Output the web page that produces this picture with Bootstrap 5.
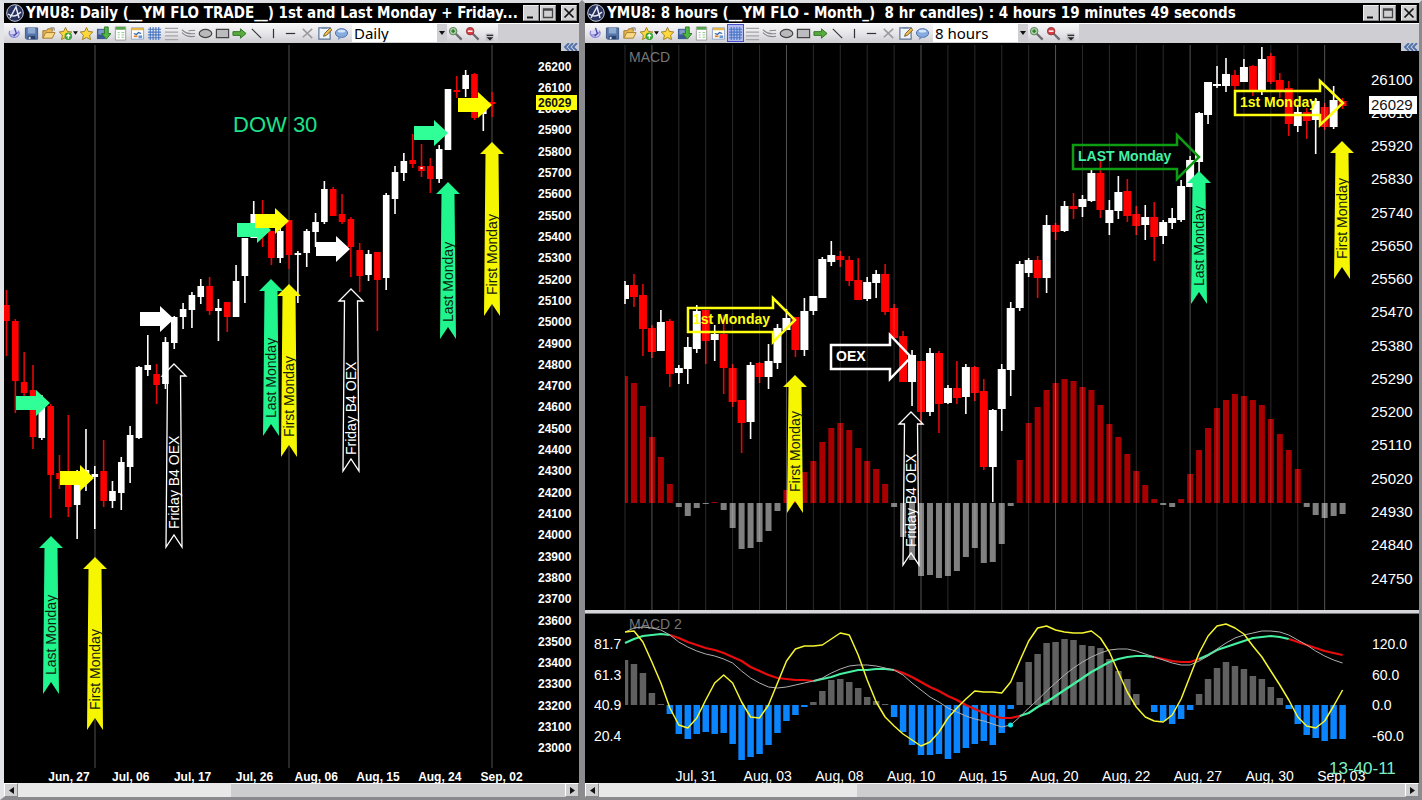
<!DOCTYPE html>
<html lang="en">
<head>
<meta charset="utf-8">
<meta name="viewport" content="width=device-width, initial-scale=1">
<title>YMU8 charts</title>
<link href="https://cdn.jsdelivr.net/npm/bootstrap@5.3.0/dist/css/bootstrap.min.css" rel="stylesheet">
<style>
body{background:#d2d2d6;font-family:"Liberation Sans",Arial,sans-serif;line-height:1}
.desk{height:100vh;min-width:900px}
.pane{min-width:0;background:#d0d0d4;border-top:3px solid #dcdee2;border-bottom:3px solid #8a8a8e;border-right:3px solid #8b8b90}
.pane-daily{flex:575 1 0;border-left:4px solid #e2e4e8}
.pane-hours{flex:834 1 0;border-left:3px solid #8b8b90}
.titlebar{height:20px;background:#000;color:#fff;padding:0 2px}
.titlebar h1{font:700 15px/20px "DejaVu Sans Condensed","Noto Sans",sans-serif;margin:0 0 0 2px;white-space:pre;min-width:0}
.winbtn{width:16px;height:16px;padding:0;border:1px solid #eee;border-right-color:#888;border-bottom-color:#888;border-radius:0;background:#d0d0d3;display:flex;color:#111}
.win-controls{gap:1px}
.toolbar{height:20px;background:#cfcfd3;border-top:1px solid #fff}
.tools{background:linear-gradient(#f6f6f8,#e6e6ea 50%,#cdcdd2);padding:0 0 0 2px;height:19px}
.tool{width:17px;height:18px;padding:0;border:1px solid transparent;background:none;display:flex;align-items:center;justify-content:center}
.tool svg{width:15px;height:15px;flex:none}
.tool-wide{width:21px}
.tool-wide .caret{width:5px;height:4px}
.tool.active{background:#b4baf0;border-color:#4a50cc}
.period{position:relative;width:95px;height:18px;margin-left:2px;background:#cfcfd3}
.period select{appearance:none;width:85px;height:18px;border:0;border-radius:0;background:#fff;color:#000;font:15px/18px "Noto Sans",sans-serif;padding:0 2px;display:block}
.period svg{width:6px;height:4px;margin:auto}
.chart{background:#000;min-height:0}
.chart svg{display:block;width:100%;height:100%}
.split{height:4px;background:#d6d6da;border-bottom:1px solid #777}
.price{flex:567 1 0}.osc{flex:169 1 0}
.collapse-tab{position:absolute;top:0;right:0;width:18px;height:8px;background:#c9ccd4;padding:0;border:0;display:flex}
.collapse-tab svg{width:18px;height:8px}
.scroller{height:14px;background:#d0d0d3}
.scroller button{width:14px;padding:0;border:1px solid #fff;border-right-color:#888;border-bottom-color:#888;background:#cfcfd2;display:flex}
.scroller button svg{margin:auto;width:5px;height:7px}
.track{background:#e8e8e8}
.thumb{background:#cdcdd0;border-top:1px solid #f4f4f4}
text{font-size:14px;fill:#fff}
.ax-bold{font-size:12px;font-weight:700}
.ax-price{font-size:15px}
.tag{font-weight:700}
.study{fill:#777}
.headline{font-size:22px;fill:#1ee08a}
.clock{font-size:17px;fill:#7df0c4}
</style>
</head>
<body>
<svg width="0" height="0" class="position-absolute" aria-hidden="true">
<symbol id="i-logo" viewBox="0 0 18 18"><circle cx="9" cy="9" r="8.3" fill="#26305c" stroke="#c6cbdc" stroke-width="1"/><path d="M4 14 10 3l3 11M2 10c4 3 9 2 13-2" fill="none" stroke="#e4e8f2" stroke-width="1.5"/></symbol>
<symbol id="i-app" viewBox="0 0 16 16"><ellipse cx="8" cy="8.500" rx="5.500" ry="5" fill="#d6d5f6"/><path d="M3 5c-2 4 1 8 6 7 4-1 5-5 3-7M2 9c4 1 8 0 11-3" fill="none" stroke="#8b88d4" stroke-width="1.200"/><path d="M8 2l2 6-3 3" fill="none" stroke="#4b49a8" stroke-width="1.500"/></symbol>
<symbol id="i-save" viewBox="0 0 16 16"><path d="M1.500 2h13v12H3l-1.500-1z" fill="#5577ad" stroke="#3e5788"/><path d="M4 2h8v6H4z" fill="#8ea9cf"/><path d="M4 10.500h8V14H4z" fill="#2c416c"/><path d="M5 11.500h2V14H5z" fill="#dde"/></symbol>
<symbol id="i-open" viewBox="0 0 16 16"><path d="M2 13V5h4l1-2h5v3" fill="#e9b94f" stroke="#9c742a"/><path d="M2 13 5 7h10l-3 6z" fill="#f8d988" stroke="#a57b2c"/><path d="M10 2h4v3" fill="none" stroke="#777"/></symbol>
<symbol id="i-star" viewBox="0 0 16 16"><path d="m8 1.500 2 4.300 4.700.6-3.400 3.300.9 4.800L8 12.200l-4.200 2.300.9-4.800L1.300 6.400 6 5.800z" fill="#ffd93b" stroke="#9f7d20"/></symbol>
<symbol id="i-staradd" viewBox="0 0 16 16"><use href="#i-star"/><circle cx="11" cy="11" r="4" fill="#38a338"/><path d="M11 13.500V9m-2 2 2-2 2 2" fill="none" stroke="#fff" stroke-width="1.300"/></symbol>
<symbol id="i-import" viewBox="0 0 16 16"><path d="M1 3h9v11H1z" fill="#3c5b96"/><path d="M2.500 4h6v5h-6z" fill="#7f9ac8"/><path d="M9 1h4v7h3l-5 6-5-6h3z" fill="#52b845" stroke="#2c7a26"/></symbol>
<symbol id="i-sheet" viewBox="0 0 16 16"><path d="M2.500 1h11v14h-11z" fill="#fff" stroke="#9a9a9a"/><path d="M3 1h10v3H3z" fill="#53a64b"/><path d="M5 7h2M9 7h3M5 9.500h2M9 9.500h3M5 12h2M9 12h3" stroke="#8fc58b"/></symbol>
<symbol id="i-chart" viewBox="0 0 16 16"><path d="M1.500 2h13v12h-13z" fill="#fff" stroke="#8ea3c4"/><path d="M2 2h12v2.500H2z" fill="#e4b748"/><path d="m4 8 3 1 2-2 3 1" fill="none" stroke="#3468b0" stroke-width="1.400"/><path d="M4 11h4" stroke="#e58427" stroke-width="2"/><path d="M9 10h4v3H9z" fill="#6697d3"/></symbol>
<symbol id="i-grid" viewBox="0 0 16 16"><path d="M3.500 1v14M6.500 1v14M9.500 1v14M12.500 1v14M1 3.500h14M1 6.500h14M1 9.500h14M1 12.500h14" stroke="#4a78c4" stroke-width="1.200"/></symbol>
<symbol id="i-lines" viewBox="0 0 16 16"><path d="M1 2.500h14M1 6.500h14M1 10.500h14M1 14.500h14" stroke="#a5a5a8" stroke-width="1.200"/></symbol>
<symbol id="i-wave" viewBox="0 0 16 16"><path d="M1 4c4 4 8 5 14 4M1 7c4 4 8 5 14 4M8 5l7-.5" fill="none" stroke="#88888c" stroke-width="1.200"/></symbol>
<symbol id="i-oval" viewBox="0 0 16 16"><ellipse cx="8" cy="8" rx="6.700" ry="4.300" fill="#b9b9bc" stroke="#444" stroke-width="1.300"/></symbol>
<symbol id="i-rect" viewBox="0 0 16 16"><path d="M1.500 3.500h13v9h-13z" fill="#bcbcc0" stroke="#444" stroke-width="1.300"/></symbol>
<symbol id="i-arrow" viewBox="0 0 16 16"><path d="M1 6h8V3l6 5-6 5v-3H1z" fill="#58ab3d" stroke="#2f7524"/></symbol>
<symbol id="i-diag" viewBox="0 0 16 16"><path d="m3 3 10 10" stroke="#333" stroke-width="1.200"/></symbol>
<symbol id="i-vert" viewBox="0 0 16 16"><path d="M8 3v10" stroke="#333" stroke-width="1.300"/></symbol>
<symbol id="i-horiz" viewBox="0 0 16 16"><path d="M3 8h10" stroke="#333" stroke-width="1.300"/></symbol>
<symbol id="i-del" viewBox="0 0 16 16"><path d="m3 3 10 10M13 3 3 12" stroke="#9b9b9e" stroke-width="1.700"/></symbol>
<symbol id="i-note" viewBox="0 0 16 16"><path d="M2 2h12v12H2z" fill="#eef4fc" stroke="#5f7595" stroke-width="1.300"/><path d="M5 1h6v2H5z" fill="#7c8da8"/><path d="m7 11 1-3 6-6 2 2-6 6z" fill="#f0bb48" stroke="#735c2c"/></symbol>
<symbol id="i-talk" viewBox="0 0 16 16"><ellipse cx="8" cy="7.500" rx="6.500" ry="4.700" fill="#86acdf" stroke="#4e6fa5"/><path d="m5 11-1 4 5-3" fill="#6f97cf"/><ellipse cx="8" cy="5.500" rx="4" ry="1.500" fill="#d6e6fa"/></symbol>
<symbol id="i-zin" viewBox="0 0 16 16"><path d="m8 8 6.500 6.500" stroke="#6b6b70" stroke-width="2.400"/><circle cx="5.500" cy="5.500" r="4" fill="#a9cfa5" stroke="#5c7c59"/><path d="M5.500 3.500v4M3.500 5.500h4" stroke="#267a26" stroke-width="1.400"/></symbol>
<symbol id="i-zout" viewBox="0 0 16 16"><path d="m8 8 6.500 6.500" stroke="#6b6b70" stroke-width="2.400"/><circle cx="5.500" cy="5.500" r="4" fill="#dc3c44" stroke="#94383c"/><path d="M3 5.500h5" stroke="#fff" stroke-width="1.600"/></symbol>
<symbol id="i-more" viewBox="0 0 16 16"><path d="M4 8h8v8H4z" fill="#c2c2c6"/><path d="M5 10h7" stroke="#333" stroke-width="1.400"/><path d="M5 12h7l-3.500 3.500z" fill="#222"/></symbol>
<symbol id="i-caret" viewBox="0 0 6 4"><path d="M0 0h6L3 4z" fill="#111"/></symbol>
<symbol id="i-left" viewBox="0 0 5 7"><path d="M5 0v7L0 3.500z" fill="#111"/></symbol>
<symbol id="i-right" viewBox="0 0 5 7"><path d="M0 0v7l5-3.500z" fill="#111"/></symbol>
<symbol id="i-min" viewBox="0 0 14 14"><path d="M3 11.500h6" stroke="#111" stroke-width="2"/></symbol>
<symbol id="i-max" viewBox="0 0 14 14"><path d="M2.500 3h9v8.500h-9zM2 4h10" fill="none" stroke="#444" stroke-width="1.300"/></symbol>
<symbol id="i-close" viewBox="0 0 14 14"><path d="m2.500 2.500 9 9m0-9-9 9" stroke="#111" stroke-width="1.700"/></symbol>
<symbol id="i-chev" viewBox="0 0 18 8"><path d="m8 0-4 4 4 4M12 0 8 4l4 4M16 0l-4 4 4 4" fill="none" stroke="#4f6fa8" stroke-width="1.800"/></symbol>
</svg>

<main class="desk d-flex">
  <section class="pane pane-daily d-flex flex-column" aria-label="Daily chart">
    <header class="titlebar d-flex align-items-center">
      <svg width="18" height="18" class="flex-shrink-0"><use href="#i-logo"/></svg>
      <h1 class="flex-grow-1">YMU8: Daily (__YM FLO TRADE__) 1st and Last Monday + Friday...</h1>
      <div class="d-flex win-controls"></div>
    </header>
    <div class="toolbar d-flex" data-period="Daily"></div>
    <div class="chart flex-grow-1 position-relative">
      <svg id="daily" viewBox="4 43 575 740"></svg>
      <button class="collapse-tab" aria-label="Collapse"><svg><use href="#i-chev"/></svg></button>
    </div>
    <div class="scroller d-flex"><button aria-label="Scroll left"><svg><use href="#i-left"/></svg></button><div class="track" style="flex:213"></div><div class="thumb" style="flex:335"></div><button aria-label="Scroll right"><svg><use href="#i-right"/></svg></button></div>
  </section>
  <section class="pane pane-hours d-flex flex-column" aria-label="8 hours chart">
    <header class="titlebar d-flex align-items-center">
      <svg width="18" height="18" class="flex-shrink-0"><use href="#i-logo"/></svg>
      <h1 class="flex-grow-1">YMU8: 8 hours (__YM FLO - Month_)  8 hr candles) : 4 hours 19 minutes 49 seconds</h1>
      <div class="d-flex win-controls"></div>
    </header>
    <div class="toolbar d-flex" data-period="8 hours" data-active="grid"></div>
    <div class="chart price position-relative">
      <svg id="hours" viewBox="585 43 834 567"></svg>
      <button class="collapse-tab" aria-label="Collapse"><svg><use href="#i-chev"/></svg></button>
    </div>
    <div class="split"></div>
    <div class="chart osc"><svg id="osc" viewBox="585 614 834 169"></svg></div>
    <div class="scroller d-flex"><button aria-label="Scroll left"><svg><use href="#i-left"/></svg></button><div class="track" style="flex:258"></div><div class="thumb" style="flex:548"></div><button aria-label="Scroll right"><svg><use href="#i-right"/></svg></button></div>
  </section>
</main>
<script src="https://cdn.jsdelivr.net/npm/bootstrap@5.3.0/dist/js/bootstrap.bundle.min.js"></script>
<script>
const icon = n => `<svg aria-hidden="true"><use href="#i-${n}"/></svg>`;
document.querySelectorAll('.win-controls').forEach(el => {
  el.innerHTML = `<button class="winbtn" aria-label="Minimize">${icon('min')}</button><button class="winbtn" aria-label="Maximize">${icon('max')}</button><button class="winbtn ms-1" aria-label="Close">${icon('close')}</button>`;
});
document.querySelectorAll('.toolbar').forEach(el => {
  const names = ['app','save','open','staradd','star','import','sheet','chart','grid','lines','wave','oval','rect','arrow','diag','vert','horiz','del','note','talk'];
  const btn = n => `<button class="tool${n === 'staradd' ? ' tool-wide' : ''}${n === el.dataset.active ? ' active' : ''}" aria-label="${n}">${icon(n)}${n === 'staradd' ? '<svg class="caret"><use href="#i-caret"/></svg>' : ''}</button>`;
  el.innerHTML = `<div class="tools d-flex">${names.map(btn).join('')}<div class="period d-flex"><select aria-label="Period"><option>${el.dataset.period}</option></select><svg><use href="#i-caret"/></svg></div>${['zin','zout','more'].map(btn).join('')}</div>`;
});

const RED = '#ff0000', WHITE = '#ffffff', YELLOW = '#f6f600', GREEN = '#20f58e';
const rect = (x, y, w, h, f) => `<rect x="${x}" y="${y}" width="${w}" height="${h}" fill="${f}"/>`;
const line = (x1, y1, x2, y2, c, w = 1) => `<path d="M${x1} ${y1}L${x2} ${y2}" stroke="${c}" stroke-width="${w}"/>`;
const text = (x, y, s, cls = '', fill = '', anchor = '') => `<text x="${x}" y="${y}" class="${cls}"${fill ? ` style="fill:${fill}"` : ''}${anchor ? ` text-anchor="${anchor}"` : ''}>${s}</text>`;

// one row: colour, wick top, body top, body bottom, wick bottom
function candles(data, x0, step, width, minX) {
  return data.trim().split(/\s*;\s*/).map((row, i) => {
    const [c, a, b, d, e] = row.split(' ');
    const x = x0 + step * i, col = c === 'r' ? RED : WHITE;
    const left = Math.max(minX, x - width / 2);
    return line(x, a, x, e, c === 'r' ? '#e00808' : WHITE, 1.6) + rect(left, b, x + width / 2 - left, Math.max(2, d - b), col);
  }).join('');
}
// vertical ribbon arrow with its caption written upwards
function ribbon(x, top, bottom, textY, label, fill) {
  const open = fill === 'none';
  return `<path d="M${x} ${top}l12 12h-5.500L${x + 8} ${bottom}l-8 -12l-8 12L${x - 6.5} ${top + 12}h-5.500z" fill="${open ? 'none' : fill}" ${open ? 'stroke="#fff" stroke-width="1.300"' : ''}/>` +
    `<text transform="translate(${x + 5} ${textY}) rotate(-90)" style="fill:${open ? '#fff' : '#10200c'}">${label}</text>`;
}
const pointer = (x, y, c) => `<path d="M${x} ${y}l-14 -13v6h-20v14h20v6z" fill="${c}"/>`;
const banner = (x, head, tip, y, c, label, tc) => `<path d="M${x} ${y - 12}H${head}V${y - 22}L${tip} ${y}L${head} ${y + 22}V${y + 12}H${x}z" fill="none" stroke="${c}" stroke-width="2.500"/>` + text(x + 5, y + 4, label, 'tag', tc);

const daily = `r 290 305 321 356;r 319 321 381 413;r 352 382 393 396;r 365 390 437 449;w 395 400 438 440;r 404 406 475 518;r 455 473 479 489;r 415 484 507 517;w 470 484 505 539;w 429 470 475 491;w 466 474 477 529;r 440 471 501 507;w 481 491 501 508;w 457 462 493 510;w 426 435 467 483;w 366 367 438 439;w 335 365 370 376;r 364 374 385 404;w 337 342 384 389;w 316 317 343 349;w 303 309 317 329;w 292 295 310 328;w 279 286 297 304;r 277 286 311 315;w 299 308 311 341;r 302 302 317 332;w 265 281 317 317;w 238 238 276 303;w 201 214 238 238;r 200 224 232 247;r 231 231 258 265;w 228 231 258 263;r 220 220 255 269;w 251 253 255 303;w 229 231 253 267;w 213 222 232 247;w 181 189 222 224;r 187 189 216 216;r 194 214 222 224;r 217 219 247 277;r 243 250 276 292;w 250 254 275 281;r 252 252 280 331;w 193 195 278 290;w 166 172 199 214;w 153 161 173 181;r 134 160 164 168;r 144 166 171 177;r 158 166 179 193;w 145 149 179 183;w 89 89 150 150;r 76 90 92 98;w 70 75 89 97;r 73 74 118 120;w 100 108 114 131;r 92 102 104 117`;
let s = [95, 289, 492].map(x => line(x, 45, x, 768, '#505050')).join('');
s += candles(daily, 6.5, 8.83, 6.6, 4) + rect(420.500, 167, 2, 2, WHITE);
s += text(233, 132, 'DOW 30', 'headline');
s += ribbon(51, 536, 694, 675, 'Last Monday', GREEN) + ribbon(95, 557, 730, 710, 'First Monday', YELLOW) + ribbon(174, 364, 547, 529, 'Friday B4 OEX', 'none')
  + ribbon(271, 279, 436, 418, 'Last Monday', GREEN) + ribbon(289, 284, 457, 437, 'First Monday', YELLOW) + ribbon(351, 289, 471, 455, 'Friday B4 OEX', 'none')
  + ribbon(448, 182, 339, 322, 'Last Monday', GREEN) + ribbon(492, 142, 316, 295, 'First Monday', YELLOW);
s += [[50, 403, '#30ff98'], [94, 478, '#ff0'], [174, 319, '#fff'], [271, 230, '#30ff98'], [289, 221, '#ff0'], [350, 249, '#fff'], [448, 133, '#30ff98'], [492, 105, '#ff0']].map(a => pointer(...a)).join('');
for (let i = 0; i <= 32; i++) s += text(538, 70.5 + i * 21.31, 26200 - i * 100, 'ax-bold');
s += rect(536, 95, 41, 15, '#ffff10') + text(538, 107, '26029', 'ax-bold', '#111');
['Jun, 27', 'Jul, 06', 'Jul, 17', 'Jul, 26', 'Aug, 06', 'Aug, 15', 'Aug, 24', 'Sep, 02'].forEach((d, i) => s += text(69 + i * 61.8, 781, d, 'ax-bold', '', 'middle'));
document.getElementById('daily').innerHTML = s;

const X0 = 625, DX = 8.97;
const hours = `w 281 285 299 304;r 274 285 297 307;r 284 295 329 356;r 325 328 352 358;w 310 322 351 351;r 319 321 374 387;w 365 368 373 384;w 337 347 369 384;w 305 311 349 353;r 310 310 341 364;w 325 334 340 361;r 315 334 368 394;r 364 368 402 407;r 400 400 423 453;w 362 365 422 439;r 362 363 377 383;w 344 361 377 389;w 324 328 363 369;w 309 318 330 330;r 317 317 350 357;w 298 311 350 356;w 296 296 311 315;w 257 259 298 298;w 241 255 262 266;r 251 256 260 267;r 256 260 281 286;r 258 280 300 300;w 277 282 299 301;w 270 274 283 298;r 264 274 312 315;r 304 308 338 338;r 331 336 382 382;w 350 355 382 406;r 361 361 412 425;w 348 353 412 416;r 351 353 404 433;w 385 388 403 404;r 361 388 398 404;w 364 367 397 414;r 366 367 393 401;r 379 391 467 470;w 409 410 467 502;w 364 369 409 431;w 302 308 370 396;w 261 264 308 311;w 258 260 273 277;r 256 260 278 298;w 215 225 278 293;r 223 225 232 240;w 201 206 231 232;r 193 206 209 219;w 195 199 207 217;w 170 173 201 202;r 160 173 210 218;w 200 210 223 235;w 176 192 211 219;r 179 191 216 222;r 206 214 226 235;w 205 217 225 240;r 202 217 237 261;w 220 222 236 244;w 208 218 223 229;w 180 186 220 222;w 156 160 187 187;w 112 113 162 172;w 82 82 115 124;w 66 84 86 88;w 58 74 86 92;r 70 75 86 92;w 59 67 82 82;r 65 66 90 96;w 47 59 90 95;r 53 56 82 84;r 73 80 90 98;r 81 88 124 136;w 105 112 126 132;r 108 112 121 139;w 98 101 120 154;r 103 107 127 130;w 86 100 127 129;r 98 101 106 109`;
const macd = [376,383,406,437,457,484,507,516,508,504,502,510,528,549,548,542,531,511,490,481,472,461,442,428,423,430,448,461,469,484,507,537,560,576,575,578,576,571,557,548,563,562,544,506,460,423,407,390,383,379,381,387,390,405,424,437,454,471,485,499,505,507,499,474,450,428,408,400,394,396,400,405,419,434,450,469,507,515,518,516,514];
const bars = (ys, base, up, down, w) => ys.map((y, i) => {
  const x = X0 + DX * i, l = Math.max(X0, x - w / 2);
  return rect(l, Math.min(y, base), x + w / 2 - l, Math.abs(y - base), y < base ? up : down);
}).join('');
s = bars(macd, 503, '#a80000', '#808080', 6) + candles(hours, X0, DX, 8, X0);
for (let i = 0; i <= 78; i += 3) s += line(X0 + DX * i, 45, X0 + DX * i, 610, i % 15 === 3 ? 'rgba(255,255,255,.33)' : 'rgba(255,255,255,.17)');
s += text(629, 62, 'MACD', 'study');
s += ribbon(795, 375, 513, 492, 'First Monday', YELLOW) + ribbon(911, 412, 565, 547, 'Friday B4 OEX', 'none') + ribbon(1199, 171, 304, 286, 'Last Monday', GREEN) + ribbon(1342, 141, 279, 259, 'First Monday', YELLOW);
s += banner(688, 773, 795, 320, '#ffff10', '1st Monday', '#ffff10') + banner(831, 890, 911, 357, '#fff', 'OEX', '#fff') + banner(1073, 1177, 1199, 157, '#0e9c12', 'LAST Monday', '#42f2a4') + banner(1235, 1320, 1343, 103, '#ffff10', '1st Monday', '#ffff10');
for (let i = 0; i <= 15; i++) s += text(1371, 84.5 + i * 33.27, 26100 - i * 90, 'ax-price');
s += rect(1369, 96, 48, 18, '#fff') + text(1371, 110, '26029', 'ax-price', '#111');
document.getElementById('hours').innerHTML = s;

const osc = [660,664,673,693,704,714,734,739,734,732,734,733,744,760,757,754,745,733,721,715,707,702,691,680,679,682,688,697,701,704,717,732,745,755,755,754,759,753,748,744,741,745,733,709,682,662,654,643,642,639,640,645,646,648,659,671,679,694,705,712,721,724,719,710,694,679,668,662,666,669,676,679,687,698,709,724,735,738,741,739,739];
const fast = [632,631,642,662,683,708,725,728,718,700,683,675,683,702,717,718,705,683,661,649,646,646,645,639,633,635,655,680,702,717,726,734,740,746,742,732,718,708,699,691,692,692,693,682,661,641,628,626,630,632,633,633,631,638,652,672,692,707,717,721,722,715,699,676,653,636,626,624,628,634,646,657,671,685,700,717,726,728,721,706,690];
const slow = [632,628,627,628,630,635,642,647,651,654,656,659,663,671,678,683,687,688,687,685,683,681,678,673,669,666,665,665,666,668,670,675,683,690,697,702,708,712,716,719,721,724,727,725,717,708,700,691,683,675,668,662,657,653,650,649,649,651,654,657,660,663,665,665,661,656,649,643,638,635,633,631,631,632,635,640,645,651,656,660,663];
const signal = [643,639,636,635,634,635,638,642,645,648,650,653,657,661,667,671,675,678,679,680,680,681,679,677,674,672,670,670,669,669,670,673,677,682,687,691,696,700,705,709,713,716,718,718,716,713,707,702,696,690,684,678,672,667,662,659,657,656,656,657,659,661,662,662,659,655,650,647,644,641,638,637,636,637,639,642,645,648,651,653,655];
const path = (ys, a, b, c, w) => `<polyline points="${ys.slice(a, b + 1).map((y, i) => (X0 + DX * (a + i)).toFixed(1) + ',' + y).join(' ')}" fill="none" stroke="${c}" stroke-width="${w}" stroke-linejoin="round"/>`;
s = bars(osc, 705, '#606060', '#0a84ff', 6.5);
s += text(629, 629, 'MACD 2', 'study');
[[0, 5, 1], [5, 21, 0], [21, 30, 1], [30, 44, 0], [44, 59, 1], [59, 64, 0], [64, 74, 1], [74, 80, 0]].forEach(([a, b, g]) => s += path(signal, a, b, g ? '#45f0a0' : '#e80c0c', 2.2));
s += path(slow, 0, 80, '#b0b0b0', 1) + path(fast, 0, 80, '#f5f530', 1.5) + '<circle cx="1010.500" cy="725" r="2.500" fill="#10e8e8"/>';
['81.7', '61.3', '40.9', '20.4'].forEach((t, i) => s += text(594, 649 + i * 30.7, t));
['120.0', '60.0', '0.0', '-60.0'].forEach((t, i) => s += text(1372, 649 + i * 30.7, t));
['Jul, 31', 'Aug, 03', 'Aug, 08', 'Aug, 10', 'Aug, 15', 'Aug, 20', 'Aug, 22', 'Aug, 27', 'Aug, 30', 'Sep, 03'].forEach((d, i) => s += text(696 + i * 71.7, 781, d, '', '', 'middle'));
s += text(1329, 774, '13-40-11', 'clock');
document.getElementById('osc').innerHTML = s;
</script>
</body>
</html>
